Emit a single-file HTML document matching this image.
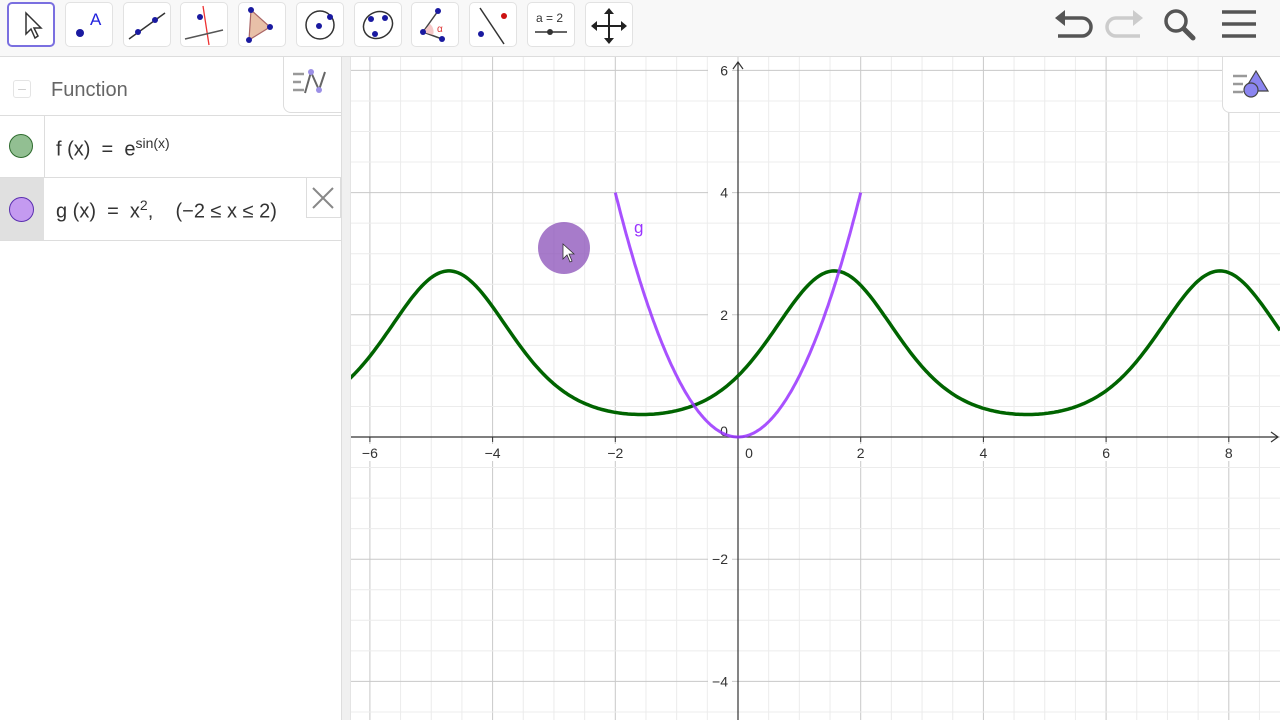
<!DOCTYPE html>
<html><head><meta charset="utf-8"><style>
body{margin:0;width:1280px;height:720px;overflow:hidden;font-family:"Liberation Sans",sans-serif;background:#fff;position:relative}
#tb{position:absolute;left:0;top:0;width:1280px;height:56px;background:#f8f8f8;border-bottom:1px solid #ddd}
.btn{position:absolute;top:2px;width:48px;height:45px;background:#fff;border:1px solid #e2e2e2;border-radius:5px;box-sizing:border-box}
#left{position:absolute;left:0;top:57px;width:341px;height:663px;background:#fff;border-right:1px solid #ddd}
.row{position:absolute;left:0;width:341px;border-bottom:1px solid #ddd}
.m{font-family:"Liberation Serif",serif;font-size:20px;color:#333;position:absolute}
</style></head><body>
<svg id="g" style="position:absolute;left:0;top:0" width="1280" height="720"></svg>
<div style="position:absolute;left:342px;top:57px;width:8px;height:663px;background:#f0f0f0;border-right:1px solid #e4e4e4"></div>
<div id="tb">
<div class="btn" style="left:7px;border:2px solid #7a6fe0"><svg width="44" height="41"><path d="M17 9 L17 30 L22 25 L26 34 L29 32 L25 24 L32 24 Z" fill="#fff" stroke="#333" stroke-width="1.5"/></svg></div>
<div class="btn" style="left:65px"><svg width="46" height="43"><circle cx="14" cy="30" r="4" fill="#1a1aa0"/><text x="24" y="22" font-size="17" fill="#2222dd" font-family="Liberation Sans">A</text></svg></div>
<div class="btn" style="left:123px"><svg width="46" height="43"><line x1="5" y1="36" x2="41" y2="10" stroke="#333" stroke-width="1.5"/><circle cx="14" cy="29" r="3" fill="#1a1aa0"/><circle cx="31" cy="17" r="3" fill="#1a1aa0"/></svg></div>
<div class="btn" style="left:180px"><svg width="46" height="43"><line x1="22" y1="3" x2="28" y2="42" stroke="#e33" stroke-width="1.3"/><line x1="4" y1="36" x2="42" y2="27" stroke="#555" stroke-width="1.5"/><circle cx="19" cy="14" r="3" fill="#1a1aa0"/></svg></div>
<div class="btn" style="left:238px"><svg width="46" height="43"><path d="M12 7 L31 24 L10 37 Z" fill="#e8c0a8" stroke="#a66" stroke-width="1.2"/><circle cx="12" cy="7" r="3" fill="#1a1aa0"/><circle cx="31" cy="24" r="3" fill="#1a1aa0"/><circle cx="10" cy="37" r="3" fill="#1a1aa0"/></svg></div>
<div class="btn" style="left:296px"><svg width="46" height="43"><circle cx="23" cy="22" r="14" fill="none" stroke="#333" stroke-width="1.5"/><circle cx="22" cy="23" r="3" fill="#1a1aa0"/><circle cx="33" cy="14" r="3" fill="#1a1aa0"/></svg></div>
<div class="btn" style="left:354px"><svg width="46" height="43"><ellipse cx="23" cy="22" rx="15" ry="13" fill="none" stroke="#333" stroke-width="1.5" transform="rotate(-30 23 22)"/><circle cx="16" cy="16" r="3" fill="#1a1aa0"/><circle cx="30" cy="15" r="3" fill="#1a1aa0"/><circle cx="20" cy="31" r="3" fill="#1a1aa0"/></svg></div>
<div class="btn" style="left:411px"><svg width="46" height="43"><path d="M26 8 L11 29 L30 36" fill="none" stroke="#444" stroke-width="1.5"/><path d="M11 29 L18 21 A10 10 0 0 1 21 32Z" fill="#f6c8c8"/><text x="25" y="29" font-size="10" fill="#d33">α</text><circle cx="26" cy="8" r="3" fill="#1a1aa0"/><circle cx="11" cy="29" r="3" fill="#1a1aa0"/><circle cx="30" cy="36" r="3" fill="#1a1aa0"/></svg></div>
<div class="btn" style="left:469px"><svg width="46" height="43"><line x1="10" y1="5" x2="34" y2="41" stroke="#333" stroke-width="1.5"/><circle cx="34" cy="13" r="3" fill="#c11"/><circle cx="11" cy="31" r="3" fill="#1a1aa0"/></svg></div>
<div class="btn" style="left:527px"><svg width="46" height="43"><text x="8" y="19" font-size="12" fill="#333">a = 2</text><line x1="7" y1="29" x2="39" y2="29" stroke="#333" stroke-width="1.5"/><circle cx="22" cy="29" r="3" fill="#333"/></svg></div>
<div class="btn" style="left:585px"><svg width="46" height="43"><path d="M23 8 V38 M8 23 H38" stroke="#222" stroke-width="2"/><path d="M23 5 L18 11 H28Z M23 41 L18 35 H28Z M5 23 L11 18 V28Z M41 23 L35 18 V28Z" fill="#222"/></svg></div>
<svg style="position:absolute;left:1050px;top:5px" width="230" height="42">
<path d="M12 13 H32 A8 8 0 0 1 32 31 H8" fill="none" stroke="#555" stroke-width="3.5"/><path d="M5 13 L15 5 V21Z" fill="#555"/>
<path d="M86 13 H66 A8 8 0 0 0 66 31 H90" fill="none" stroke="#ccc" stroke-width="3.5"/><path d="M93 13 L83 5 V21Z" fill="#ccc"/>
<circle cx="126" cy="16" r="10" fill="none" stroke="#555" stroke-width="3.5"/><line x1="134" y1="24" x2="143" y2="33" stroke="#555" stroke-width="5" stroke-linecap="round"/>
<path d="M172 7 H206 M172 19 H206 M172 31 H206" stroke="#555" stroke-width="3.5"/></svg>
</div>
<div id="left">
<div class="row" style="top:0;height:58px"><div style="position:absolute;left:13px;top:23px;width:16px;height:16px;border:1px solid #e4e4e4;border-radius:3px;color:#ccc;font-size:14px;line-height:14px;text-align:center">–</div><div style="position:absolute;left:51px;top:22px;font-size:20px;color:#666">Function</div>
<div style="position:absolute;left:283px;top:0;width:57px;height:55px;border:1px solid #ddd;border-top:none;border-right:none;border-radius:0 0 0 8px;background:#fff"><svg width="57" height="55"><path d="M9 17 H20 M9 25 H17 M9 33 H20" stroke="#999" stroke-width="2.5"/><path d="M21 36 L27 15 L35 33 L41 15" fill="none" stroke="#666" stroke-width="2"/><circle cx="27" cy="15" r="3" fill="#9b8fe6"/><circle cx="35" cy="33" r="3" fill="#9b8fe6"/></svg></div></div>
<div class="row" style="top:58px;height:62px"><div style="position:absolute;left:44px;top:0;height:62px;border-left:1px solid #ddd"></div>
<div style="position:absolute;left:9px;top:19px;width:24px;height:24px;border-radius:50%;background:#92bf92;border:1px solid #2e6b2e;box-sizing:border-box"></div>
<div class="m" style="left:56px;top:20px;font-family:'Liberation Sans',sans-serif;font-size:20px">f (x) &nbsp;= &nbsp;e<sup style="font-size:14px">sin(x)</sup></div></div>
<div class="row" style="top:121px;height:62px"><div style="position:absolute;left:0;top:0;width:44px;height:62px;background:#e0e0e0"></div>
<div style="position:absolute;left:9px;top:19px;width:25px;height:25px;border-radius:50%;background:#c49af0;border:1px solid #5a2fb0;box-sizing:border-box"></div>
<div class="m" style="left:56px;top:19px;font-family:'Liberation Sans',sans-serif;font-size:20px">g (x) &nbsp;= &nbsp;x<sup style="font-size:14px">2</sup>, &nbsp;&nbsp;&nbsp;(−2 ≤ x ≤ 2)</div>
<div style="position:absolute;left:306px;top:0;width:35px;height:40px;background:#fff;border:1px solid #ddd;border-top:none;box-sizing:border-box"><svg width="34" height="40"><path d="M6 10 L26 30 M26 10 L6 30" stroke="#888" stroke-width="2"/></svg></div></div>
</div>
<div style="position:absolute;left:1222px;top:57px;width:58px;height:55px;background:#fff;border:1px solid #ddd;border-top:none;border-right:none;border-radius:0 0 0 8px"><svg width="58" height="55"><path d="M10 19 H24 M10 27 H20 M10 35 H20" stroke="#999" stroke-width="2.5"/><path d="M33 14 L45 34 H21Z" fill="#8b85f0" stroke="#444" stroke-width="1.2"/><circle cx="28" cy="33" r="7" fill="#8b85f0" stroke="#444" stroke-width="1.2"/></svg></div>
<script>
var s=document.getElementById('g'),h='';
var X0=738,Y0=437,K=61.35,KY=61.1,L=350;
function px(x){return X0+x*K}function py(y){return Y0-y*KY}
for(var i=-14;i<=18;i++){var x=px(i/2);if(x<L)continue;h+='<line x1="'+x+'" y1="57" x2="'+x+'" y2="720" stroke="'+(i%4==0?'#c8c8c8':'#ececec')+'" stroke-width="1"/>';}
for(var j=-10;j<=14;j++){var y=py(j/2);if(y<57)continue;h+='<line x1="'+L+'" y1="'+y+'" x2="1280" y2="'+y+'" stroke="'+(j%4==0?'#c8c8c8':'#ececec')+'" stroke-width="1"/>';}
h+='<line x1="'+L+'" y1="'+Y0+'" x2="1278" y2="'+Y0+'" stroke="#333" stroke-width="1.2"/><line x1="'+X0+'" y1="62" x2="'+X0+'" y2="720" stroke="#333" stroke-width="1.2"/>';
h+='<path d="M1271 432 L1278 437 L1271 442 M733 69 L738 62 L743 69" fill="none" stroke="#333" stroke-width="1.2"/>';
var lab=[[-6,'−6'],[-4,'−4'],[-2,'−2'],[2,'2'],[4,'4'],[6,'6'],[8,'8']];
lab.forEach(function(l){var x=px(l[0]);h+='<line x1="'+x+'" y1="437" x2="'+x+'" y2="442" stroke="#333"/><rect x="'+(x-11)+'" y="444" width="22" height="17" fill="#fff"/><text x="'+x+'" y="458" text-anchor="middle" font-size="14" fill="#333" font-family="Liberation Sans">'+l[1]+'</text>'});
h+='<text x="749" y="458" text-anchor="middle" font-size="14" fill="#333" font-family="Liberation Sans">0</text>';
h+='<text x="724" y="436" font-size="14" fill="#333" font-family="Liberation Sans" text-anchor="middle">0</text>';
[[6,'6'],[4,'4'],[2,'2'],[-2,'−2'],[-4,'−4']].forEach(function(l){var y=py(l[0]);h+='<rect x="708" y="'+(y-8)+'" width="24" height="16" fill="#fff"/><text x="728" y="'+(y+5)+'" text-anchor="end" font-size="14" fill="#333" font-family="Liberation Sans">'+l[1]+'</text>'});
var d='';for(var x=L;x<=1280;x+=2){var v=(x-X0)/K;d+=(d?'L':'M')+x+' '+py(Math.exp(Math.sin(v))).toFixed(1)}
h+='<path d="'+d+'" fill="none" stroke="#006400" stroke-width="3.5"/>';
d='';for(var v=-2;v<=2.0001;v+=0.02){d+=(d?'L':'M')+px(v).toFixed(1)+' '+py(v*v).toFixed(1)}
h+='<path d="'+d+'" fill="none" stroke="#9933ff" stroke-width="3" stroke-opacity="0.85"/>';
h+='<text x="634" y="233" font-size="17" fill="#9933ff" font-family="Liberation Sans">g</text>';
h+='<circle cx="564" cy="248" r="26" fill="#8a4fb8" fill-opacity="0.75"/><path d="M563 244 V259 L567 255 L570 262 L572 261 L569 254 L574 254Z" fill="#fff" stroke="#333" stroke-width="0.8"/>';
s.innerHTML=h;
</script>
</body></html>
